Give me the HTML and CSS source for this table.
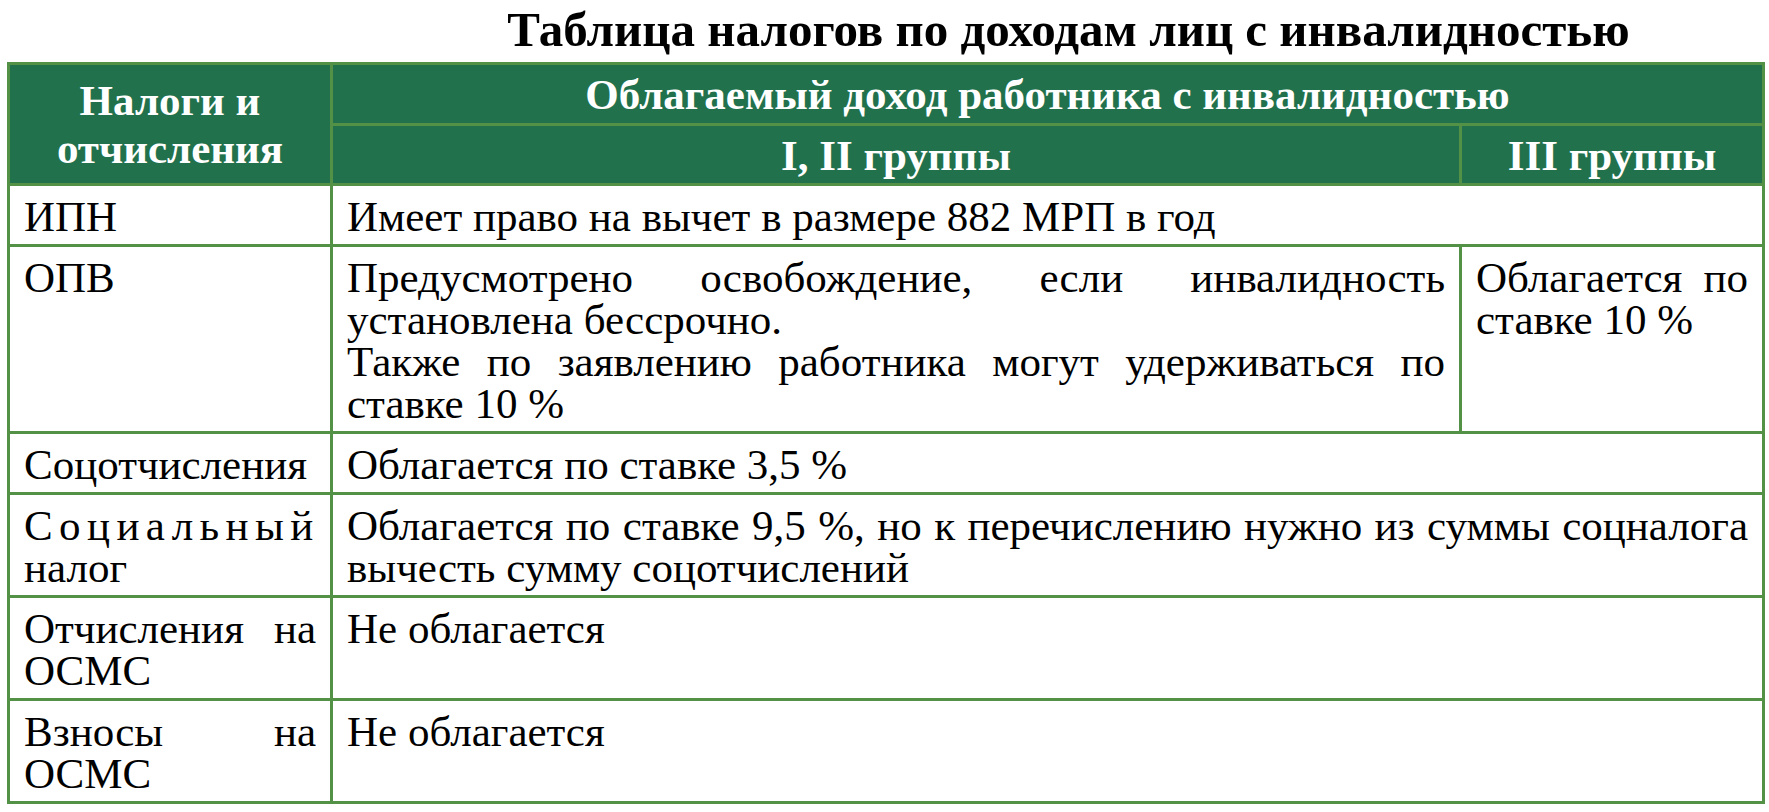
FILE: index.html
```
<!DOCTYPE html>
<html lang="ru">
<head>
<meta charset="utf-8">
<title>Таблица налогов по доходам лиц с инвалидностью</title>
<link rel="stylesheet" href="styles.css">
</head>
<body>
<h1 class="title">Таблица налогов по доходам лиц с инвалидностью</h1>
<table class="tax">
  <colgroup>
    <col class="c1">
    <col class="c2">
    <col class="c3">
  </colgroup>
  <thead>
    <tr class="h1row">
      <th rowspan="2" class="hfirst">Налоги и<br>отчисления</th>
      <th colspan="2">Облагаемый доход работника с инвалидностью</th>
    </tr>
    <tr class="h2row">
      <th>I, II группы</th>
      <th>III группы</th>
    </tr>
  </thead>
  <tbody>
    <tr>
      <td>ИПН</td>
      <td colspan="2">Имеет право на вычет в размере 882 МРП в год</td>
    </tr>
    <tr>
      <td>ОПВ</td>
      <td>Предусмотрено освобождение, если инвалидность установлена бессрочно.<br>Также по заявлению работника могут удерживаться по ставке 10 %</td>
      <td>Облагается по ставке 10 %</td>
    </tr>
    <tr>
      <td>Соцотчисления</td>
      <td colspan="2">Облагается по ставке 3,5 %</td>
    </tr>
    <tr>
      <td><span class="spread">Социальный</span> налог</td>
      <td colspan="2">Облагается по ставке 9,5 %, но к перечислению нужно из суммы соцналога вычесть сумму соцотчислений</td>
    </tr>
    <tr>
      <td>Отчисления на ОСМС</td>
      <td colspan="2">Не облагается</td>
    </tr>
    <tr>
      <td>Взносы на ОСМС</td>
      <td colspan="2">Не облагается</td>
    </tr>
  </tbody>
</table>
</body>
</html>
```

FILE: styles.css
```
html, body {
  margin: 0;
  padding: 0;
  background: #ffffff;
}
body {
  font-family: "Liberation Serif", "Times New Roman", serif;
  color: #000;
  width: 1769px;
}
.title {
  margin: 0;
  padding: 3px 0 5px 368px;
  font-size: 49px;
  line-height: 54px;
  font-weight: bold;
  text-align: center;
  color: #000;
}
.tax {
  margin-left: 7px;
  width: 1755px;
  border-collapse: collapse;
  table-layout: fixed;
  font-size: 43px;
}
.c1 { width: 323px; }
.c2 { width: 1129px; }
.c3 { width: 303px; }
.tax th, .tax td {
  border: 3px solid #539147;
}
.tax th {
  background: #22714d;
  color: #fff;
  font-weight: bold;
  text-align: center;
  vertical-align: middle;
  padding: 2px 10px 0 10px;
  line-height: 48px;
}
.h1row { height: 61px; }
.h2row { height: 60px; }
.tax td {
  vertical-align: top;
  text-align: justify;
  padding: 10px 14px 6px 14px;
  line-height: 42px;
}
.spread {
  display: inline-block;
  height: 42px;
  letter-spacing: 6.4px;
}
```
